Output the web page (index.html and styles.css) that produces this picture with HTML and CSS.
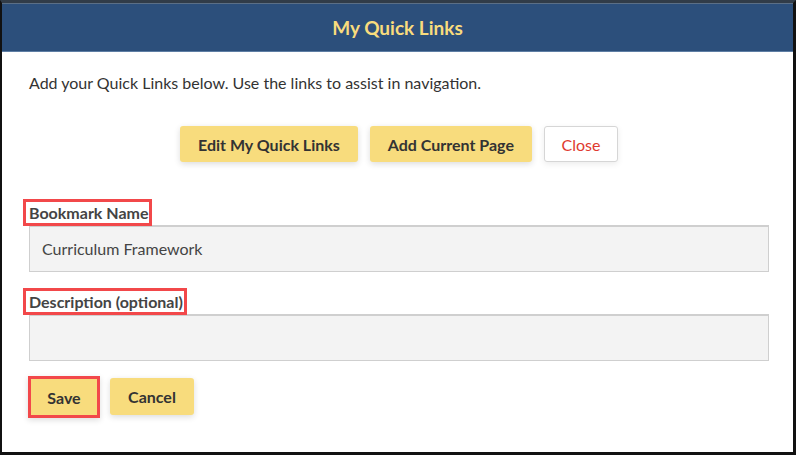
FILE: index.html
```html
<!DOCTYPE html>
<html lang="en">
<head>
    <meta charset="UTF-8">
    <meta name="viewport" content="width=device-width, initial-scale=1.0">
    <title>My Quick Links</title>
    <link rel="stylesheet" href="styles.css">
</head>
<body>
    <div class="modal">
        <div class="modal-header">My Quick Links</div>

        <div class="modal-body">
            <p class="intro">Add your Quick Links below. Use the links to assist in navigation.</p>

            <div class="actions">
                <button class="btn btn-yellow">Edit My Quick Links</button>
                <button class="btn btn-yellow">Add Current Page</button>
                <button class="btn btn-close">Close</button>
            </div>

            <div class="field">
                <label class="field-label"><span class="mark">Bookmark Name</span></label>
                <div class="field-input">Curriculum Framework</div>
            </div>

            <div class="field">
                <label class="field-label"><span class="mark">Description (optional)</span></label>
                <div class="field-input"></div>
            </div>

            <div class="form-actions">
                <button class="btn btn-yellow btn-save">Save</button>
                <button class="btn btn-yellow btn-cancel">Cancel</button>
            </div>
        </div>
    </div>
</body>
</html>
```

FILE: styles.css
```css
html, body {
    margin: 0;
    padding: 0;
    background: #fff;
}

body {
    font-family: Lato, 'Open Sans', sans-serif;
    color: #333;
}

.modal {
    width: 796px;
    height: 455px;
    box-sizing: border-box;
    border-left: 2px solid #111;
    border-right: 3px solid #111;
    border-bottom: 3px solid #111;
    border-top: 3px solid #313c48;
    background: #fff;
}

.modal-header {
    height: 49px;
    box-sizing: border-box;
    background: #2c4f7b;
    border-top: 1px solid #5b6f86;
    border-bottom: 1px solid #5e7ea4;
    color: #f9dc7d;
    font-size: 19px;
    font-weight: bold;
    text-align: center;
    line-height: 47px;
}

.modal-body {
    padding: 0 24px 0 27px;
}

.intro {
    margin: 21px 0 0;
    font-size: 16px;
    line-height: 20px;
}

.actions {
    display: flex;
    justify-content: center;
    gap: 12px;
    margin-top: 33px;
}

.btn {
    font-family: inherit;
    font-size: 16px;
    font-weight: bold;
    color: #333;
    border: none;
    border-radius: 3px;
    height: 36px;
    padding: 0 18px;
    cursor: pointer;
}

.btn-yellow {
    background: #f8dc7d;
    box-shadow: 0 2px 6px rgba(0, 0, 0, 0.14);
}

.btn-close {
    background: #fff;
    border: 1px solid #d6d6d6;
    color: #e03a2f;
    font-weight: normal;
    box-shadow: 0 2px 6px rgba(0, 0, 0, 0.08);
    width: 74px;
    padding: 0;
}

.field {
    margin-top: 37px;
}

.field + .field {
    margin-top: 16px;
}

.field-label {
    display: block;
    font-size: 16px;
    font-weight: bold;
    color: #444;
    line-height: 21px;
}

.mark {
    display: inline-block;
    border: 3px solid #f2484a;
    padding: 0 1px 0 3px;
    margin-left: -6px;
}

.field-input {
    height: 47px;
    box-sizing: border-box;
    margin-top: -1px;
    background: #f3f3f3;
    border: 1px solid #cfcfcf;
    border-top-width: 2px;
    padding: 0 12px;
    font-size: 16px;
    line-height: 44px;
    color: #444;
}

.form-actions {
    display: flex;
    align-items: flex-start;
    gap: 10px;
    margin-top: 15px;
}

.btn-save {
    height: 42px;
    width: 72px;
    padding: 0;
    margin-left: -1px;
    border: 3px solid #f2484a;
    border-radius: 0;
}

.btn-cancel {
    height: 37px;
    width: 84px;
    padding: 0;
    margin-top: 2px;
}
```
